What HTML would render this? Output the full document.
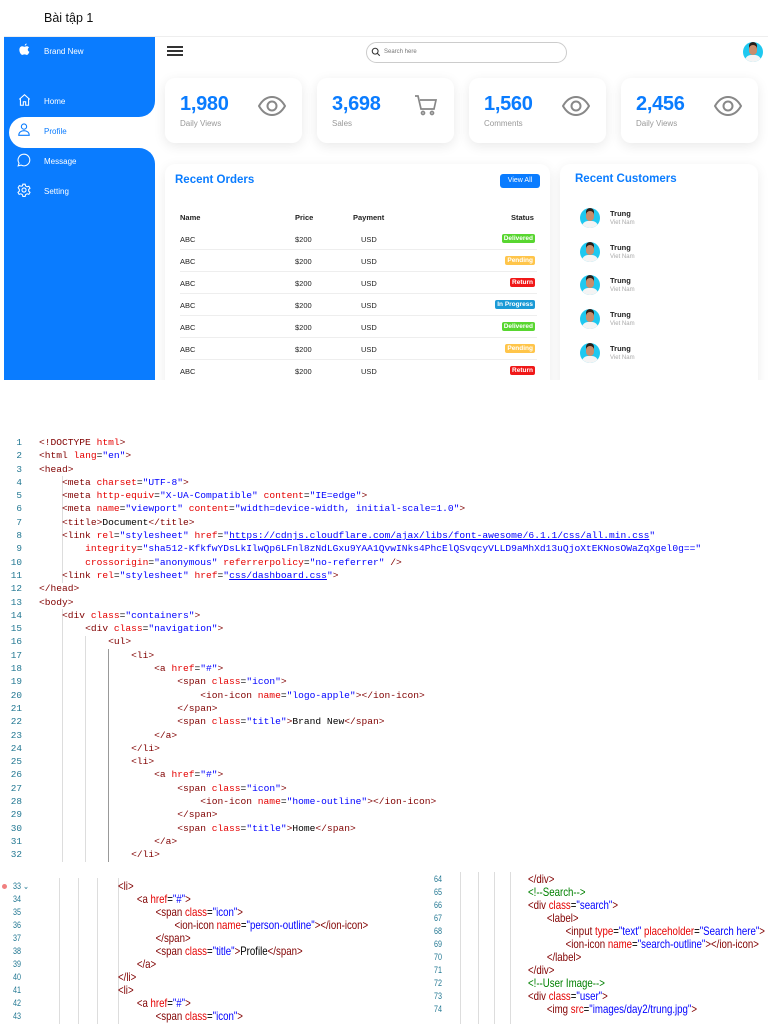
<!DOCTYPE html>
<html><head><meta charset="utf-8">
<style>
*{margin:0;padding:0;box-sizing:border-box}
body{width:768px;height:1024px;background:#fff;position:relative;overflow:hidden;font-family:"Liberation Sans",sans-serif}
.abs{position:absolute}
.side{left:4px;top:37px;width:151px;height:343px;background:#0a7cff}
.nav{position:absolute;left:44px;color:#fff;font-size:8px}
.card{position:absolute;top:78px;width:137px;height:65px;background:#fff;border-radius:10px;box-shadow:0 3px 12px rgba(0,0,0,.09)}
.card .n{position:absolute;left:15px;top:15px;font-size:20px;color:#0a7cff;font-weight:bold;letter-spacing:-.3px}
.card .l{position:absolute;left:15px;top:41px;font-size:8px;color:#999}
.card svg{position:absolute;right:16px;top:18px}
.row{position:absolute;left:180px;width:357px;height:22px;border-bottom:1px solid #eee;font-size:7.5px;color:#222}
.row span{position:absolute;top:7px}
.badge{position:absolute;right:2px;top:6px;color:#fff;font-weight:bold;font-size:6.5px;padding:1px 2px;border-radius:2px}
.av{position:absolute;width:20px;height:20px;border-radius:50%;background:#1ec8f0;overflow:hidden}
.av::after{content:"";position:absolute;left:6px;top:3px;width:8px;height:10px;border-radius:4px;background:#c98d6c;box-shadow:0 -3px 0 #2a1f1a}
.av::before{content:"";position:absolute;left:2px;top:13px;width:16px;height:10px;border-radius:6px 6px 0 0;background:#f4f4f4}
.code{position:absolute;font-family:"Liberation Mono",monospace;font-size:9.6px;line-height:13.3px;white-space:pre;color:#000}
.num{position:absolute;font-family:"Liberation Mono",monospace;font-size:9.4px;line-height:13.3px;color:#237893;white-space:pre;text-align:right;width:20px}
.t{color:#800000}.a{color:#e50000}.v{color:#0000ff}.u{text-decoration:underline;color:#0000ff}.c{color:#008000}
.code2{position:absolute;font-family:"Liberation Sans",sans-serif;font-size:11.8px;line-height:13px;white-space:pre;transform:scaleX(.82);transform-origin:left top}
.num2{position:absolute;font-family:"Liberation Sans",sans-serif;font-size:9px;line-height:13px;color:#237893;white-space:pre;transform:scaleX(.8);transform-origin:left top}
.g{position:absolute;width:1px;background:#ddd}
</style></head><body>
<div class="abs" style="left:44px;top:11px;font-size:12.5px;color:#111">Bài tập 1</div>
<div class="abs" style="left:4px;top:36px;width:764px;height:344px;background:#fff;border-top:1px solid #eee"></div>
<div class="abs side"></div>
<div class="abs" style="left:9px;top:117px;width:146px;height:31px;background:#fff;border-radius:16px 0 0 16px"></div>
<div class="abs" style="left:135px;top:97px;width:20px;height:20px;background:#fff"></div>
<div class="abs" style="left:135px;top:97px;width:20px;height:20px;background:#0a7cff;border-radius:0 0 16px 0"></div>
<div class="abs" style="left:135px;top:148px;width:20px;height:20px;background:#fff"></div>
<div class="abs" style="left:135px;top:148px;width:20px;height:20px;background:#0a7cff;border-radius:0 16px 0 0"></div>
<svg class="abs" style="left:18px;top:43px" width="13" height="13" viewBox="0 0 24 24"><path fill="#fff" d="M16 1c0 2-1.5 3.8-3.5 4C12.3 3 14 1.2 16 1zM12 7c1 0 2.5-1.2 4.3-1 1 0 3 .5 4 2.2-3.3 2-2.7 6.8.7 8C20 19 18.3 22 16.5 22c-1.5 0-2-1-4.4-1s-3 1-4.3 1C5.5 22 2.5 17 2.5 12.5c0-4.3 2.8-6.5 5.3-6.5 1.8 0 3 1 4.2 1z"/></svg>
<div class="nav" style="top:47px">Brand New</div>
<svg class="abs" style="left:17px;top:93px" width="15" height="14" viewBox="0 0 24 24" fill="none" stroke="#fff" stroke-width="1.8"><path d="M3 11L12 3l9 8M5 9v12h5v-6h4v6h5V9"/></svg>
<div class="nav" style="top:97px">Home</div>
<svg class="abs" style="left:17px;top:122px" width="14" height="15" viewBox="0 0 24 24" fill="none" stroke="#0a7cff" stroke-width="1.8"><circle cx="12" cy="7" r="4.5"/><path d="M3 22c0-5 4-8 9-8s9 3 9 8z"/></svg>
<div class="nav" style="top:127px;color:#0a7cff">Profile</div>
<svg class="abs" style="left:17px;top:153px" width="14" height="14" viewBox="0 0 24 24" fill="none" stroke="#fff" stroke-width="1.8"><path d="M12 2a10 10 0 1 1-5 18.7L2 22l1.5-4.5A10 10 0 0 1 12 2z"/></svg>
<div class="nav" style="top:157px">Message</div>
<svg class="abs" style="left:17px;top:183px" width="14" height="14" viewBox="0 0 24 24" fill="none" stroke="#fff" stroke-width="1.8"><circle cx="12" cy="12" r="3.5"/><path d="M10 2h4l.7 3 2.6 1.5 3-1 2 3.5-2.3 2v3l2.3 2-2 3.5-3-1-2.6 1.5-.7 3h-4l-.7-3-2.6-1.5-3 1-2-3.5 2.3-2v-3L2 8l2-3.5 3 1L9.3 5z"/></svg>
<div class="nav" style="top:187px">Setting</div>

<div class="abs" style="left:167px;top:46px;width:16px;height:2px;background:#333;box-shadow:0 4px 0 #333,0 8px 0 #333"></div>
<div class="abs" style="left:366px;top:42px;width:201px;height:21px;border:1px solid #ccc;border-radius:11px"></div>
<svg class="abs" style="left:371px;top:47px" width="10" height="10" viewBox="0 0 24 24" fill="none" stroke="#333" stroke-width="2.5"><circle cx="10" cy="10" r="7"/><path d="M15 15l6 6"/></svg>
<div class="abs" style="left:384px;top:49px;font-size:6px;color:#777">Search here</div>
<div class="av" style="left:743px;top:42px"></div>

<div class="card" style="left:165px"><div class="n">1,980</div><div class="l">Daily Views</div><svg width="28" height="20" viewBox="0 0 28 20" fill="none" stroke="#888" stroke-width="2"><path d="M1 10C5 3 10 1 14 1s9 2 13 9c-4 7-9 9-13 9S5 17 1 10z"/><circle cx="14" cy="10" r="4.5"/></svg></div>
<div class="card" style="left:317px"><div class="n">3,698</div><div class="l">Sales</div><svg width="24" height="24" style="top:15px" viewBox="0 0 24 24" fill="none" stroke="#888" stroke-width="1.7"><path d="M1 3h3l3 13h13l2-9H6"/><circle cx="9" cy="20" r="1.5"/><circle cx="18" cy="20" r="1.5"/></svg></div>
<div class="card" style="left:469px"><div class="n">1,560</div><div class="l">Comments</div><svg width="28" height="20" viewBox="0 0 28 20" fill="none" stroke="#888" stroke-width="2"><path d="M1 10C5 3 10 1 14 1s9 2 13 9c-4 7-9 9-13 9S5 17 1 10z"/><circle cx="14" cy="10" r="4.5"/></svg></div>
<div class="card" style="left:621px"><div class="n">2,456</div><div class="l">Daily Views</div><svg width="28" height="20" viewBox="0 0 28 20" fill="none" stroke="#888" stroke-width="2"><path d="M1 10C5 3 10 1 14 1s9 2 13 9c-4 7-9 9-13 9S5 17 1 10z"/><circle cx="14" cy="10" r="4.5"/></svg></div>

<div class="abs" style="left:165px;top:164px;width:385px;height:230px;border-radius:10px;box-shadow:0 3px 12px rgba(0,0,0,.08);background:#fff"></div>
<div class="abs" style="left:560px;top:164px;width:198px;height:230px;border-radius:10px;box-shadow:0 3px 12px rgba(0,0,0,.08);background:#fff"></div>
<div class="abs" style="left:0;top:380px;width:768px;height:50px;background:#fff"></div>
<div class="abs" style="left:175px;top:174px;font-size:11.5px;font-weight:bold;color:#0a7cff">Recent Orders</div>
<div class="abs" style="left:500px;top:174px;width:40px;height:14px;background:#0a7cff;border-radius:3px;color:#fff;font-size:7px;text-align:center;line-height:14px">View All</div>
<div class="abs" style="left:180px;top:213px;font-size:7.5px;font-weight:bold;color:#222">Name</div>
<div class="abs" style="left:295px;top:213px;font-size:7.5px;font-weight:bold;color:#222">Price</div>
<div class="abs" style="left:353px;top:213px;font-size:7.5px;font-weight:bold;color:#222">Payment</div>
<div class="abs" style="left:511px;top:213px;font-size:7.5px;font-weight:bold;color:#222">Status</div>
<div class="row" style="top:228px"><span style="left:0">ABC</span><span style="left:115px">$200</span><span style="left:181px">USD</span><b class="badge" style="background:#58d630">Delivered</b></div>
<div class="row" style="top:250px"><span style="left:0">ABC</span><span style="left:115px">$200</span><span style="left:181px">USD</span><b class="badge" style="background:#ffc54a">Pending</b></div>
<div class="row" style="top:272px"><span style="left:0">ABC</span><span style="left:115px">$200</span><span style="left:181px">USD</span><b class="badge" style="background:#f01818">Return</b></div>
<div class="row" style="top:294px"><span style="left:0">ABC</span><span style="left:115px">$200</span><span style="left:181px">USD</span><b class="badge" style="background:#1b9ad6">In Progress</b></div>
<div class="row" style="top:316px"><span style="left:0">ABC</span><span style="left:115px">$200</span><span style="left:181px">USD</span><b class="badge" style="background:#58d630">Delivered</b></div>
<div class="row" style="top:338px"><span style="left:0">ABC</span><span style="left:115px">$200</span><span style="left:181px">USD</span><b class="badge" style="background:#ffc54a">Pending</b></div>
<div class="row" style="top:360px;border:0;height:20px;overflow:hidden"><span style="left:0">ABC</span><span style="left:115px">$200</span><span style="left:181px">USD</span><b class="badge" style="background:#f01818">Return</b></div>

<div class="abs" style="left:575px;top:173px;font-size:11.5px;font-weight:bold;color:#0a7cff">Recent Customers</div>
<div class="av" style="left:580px;top:208px"></div><div class="abs" style="left:610px;top:209px;font-size:7.5px;font-weight:bold;color:#222">Trung</div><div class="abs" style="left:610px;top:220px;font-size:6px;color:#aaa">Viet Nam</div>
<div class="av" style="left:580px;top:242px"></div><div class="abs" style="left:610px;top:243px;font-size:7.5px;font-weight:bold;color:#222">Trung</div><div class="abs" style="left:610px;top:254px;font-size:6px;color:#aaa">Viet Nam</div>
<div class="av" style="left:580px;top:275px"></div><div class="abs" style="left:610px;top:276px;font-size:7.5px;font-weight:bold;color:#222">Trung</div><div class="abs" style="left:610px;top:287px;font-size:6px;color:#aaa">Viet Nam</div>
<div class="av" style="left:580px;top:309px"></div><div class="abs" style="left:610px;top:310px;font-size:7.5px;font-weight:bold;color:#222">Trung</div><div class="abs" style="left:610px;top:321px;font-size:6px;color:#aaa">Viet Nam</div>
<div class="av" style="left:580px;top:343px"></div><div class="abs" style="left:610px;top:344px;font-size:7.5px;font-weight:bold;color:#222">Trung</div><div class="abs" style="left:610px;top:355px;font-size:6px;color:#aaa">Viet Nam</div>
<div class="abs" style="left:556px;top:380px;width:212px;height:50px;background:#fff"></div>

<div class="num" style="left:2px;top:436px">1
2
3
4
5
6
7
8
9
10
11
12
13
14
15
16
17
18
19
20
21
22
23
24
25
26
27
28
29
30
31
32</div>
<div class="g" style="left:62px;top:476px;height:107px"></div>
<div class="g" style="left:62px;top:609px;height:253px"></div>
<div class="g" style="left:85px;top:636px;height:226px"></div>
<div class="g" style="left:108px;top:649px;height:213px;background:#999"></div>
<div class="code" style="left:39px;top:436px"><span class="t">&lt;!DOCTYPE</span> <span class="a">html</span><span class="t">&gt;</span>
<span class="t">&lt;html</span> <span class="a">lang</span>=<span class="v">"en"</span><span class="t">&gt;</span>
<span class="t">&lt;head&gt;</span>
    <span class="t">&lt;meta</span> <span class="a">charset</span>=<span class="v">"UTF-8"</span><span class="t">&gt;</span>
    <span class="t">&lt;meta</span> <span class="a">http-equiv</span>=<span class="v">"X-UA-Compatible"</span> <span class="a">content</span>=<span class="v">"IE=edge"</span><span class="t">&gt;</span>
    <span class="t">&lt;meta</span> <span class="a">name</span>=<span class="v">"viewport"</span> <span class="a">content</span>=<span class="v">"width=device-width, initial-scale=1.0"</span><span class="t">&gt;</span>
    <span class="t">&lt;title&gt;</span>Document<span class="t">&lt;/title&gt;</span>
    <span class="t">&lt;link</span> <span class="a">rel</span>=<span class="v">"stylesheet"</span> <span class="a">href</span>=<span class="v">"<span class="u">https://cdnjs.cloudflare.com/ajax/libs/font-awesome/6.1.1/css/all.min.css</span>"</span>
        <span class="a">integrity</span>=<span class="v">"sha512-KfkfwYDsLkIlwQp6LFnl8zNdLGxu9YAA1QvwINks4PhcElQSvqcyVLLD9aMhXd13uQjoXtEKNosOWaZqXgel0g=="</span>
        <span class="a">crossorigin</span>=<span class="v">"anonymous"</span> <span class="a">referrerpolicy</span>=<span class="v">"no-referrer"</span> <span class="t">/&gt;</span>
    <span class="t">&lt;link</span> <span class="a">rel</span>=<span class="v">"stylesheet"</span> <span class="a">href</span>=<span class="v">"<span class="u">css/dashboard.css</span>"</span><span class="t">&gt;</span>
<span class="t">&lt;/head&gt;</span>
<span class="t">&lt;body&gt;</span>
    <span class="t">&lt;div</span> <span class="a">class</span>=<span class="v">"containers"</span><span class="t">&gt;</span>
        <span class="t">&lt;div</span> <span class="a">class</span>=<span class="v">"navigation"</span><span class="t">&gt;</span>
            <span class="t">&lt;ul&gt;</span>
                <span class="t">&lt;li&gt;</span>
                    <span class="t">&lt;a</span> <span class="a">href</span>=<span class="v">"#"</span><span class="t">&gt;</span>
                        <span class="t">&lt;span</span> <span class="a">class</span>=<span class="v">"icon"</span><span class="t">&gt;</span>
                            <span class="t">&lt;ion-icon</span> <span class="a">name</span>=<span class="v">"logo-apple"</span><span class="t">&gt;&lt;/ion-icon&gt;</span>
                        <span class="t">&lt;/span&gt;</span>
                        <span class="t">&lt;span</span> <span class="a">class</span>=<span class="v">"title"</span><span class="t">&gt;</span>Brand New<span class="t">&lt;/span&gt;</span>
                    <span class="t">&lt;/a&gt;</span>
                <span class="t">&lt;/li&gt;</span>
                <span class="t">&lt;li&gt;</span>
                    <span class="t">&lt;a</span> <span class="a">href</span>=<span class="v">"#"</span><span class="t">&gt;</span>
                        <span class="t">&lt;span</span> <span class="a">class</span>=<span class="v">"icon"</span><span class="t">&gt;</span>
                            <span class="t">&lt;ion-icon</span> <span class="a">name</span>=<span class="v">"home-outline"</span><span class="t">&gt;&lt;/ion-icon&gt;</span>
                        <span class="t">&lt;/span&gt;</span>
                        <span class="t">&lt;span</span> <span class="a">class</span>=<span class="v">"title"</span><span class="t">&gt;</span>Home<span class="t">&lt;/span&gt;</span>
                    <span class="t">&lt;/a&gt;</span>
                <span class="t">&lt;/li&gt;</span></div>

<div class="abs" style="left:2px;top:884px;width:5px;height:5px;border-radius:50%;background:#f08080"></div>
<div class="num2" style="left:13px;top:880px">33 ⌄
34
35
36
37
38
39
40
41
42
43</div>
<div class="g" style="left:59px;top:878px;height:146px"></div>
<div class="g" style="left:78px;top:878px;height:146px"></div>
<div class="g" style="left:97px;top:878px;height:146px"></div>
<div class="g" style="left:118px;top:878px;height:146px"></div>
<div class="code2" style="left:118px;top:880px"><span class="t">&lt;li&gt;</span>
       <span class="t">&lt;a</span> <span class="a">href</span>=<span class="v">"#"</span><span class="t">&gt;</span>
              <span class="t">&lt;span</span> <span class="a">class</span>=<span class="v">"icon"</span><span class="t">&gt;</span>
                     <span class="t">&lt;ion-icon</span> <span class="a">name</span>=<span class="v">"person-outline"</span><span class="t">&gt;&lt;/ion-icon&gt;</span>
              <span class="t">&lt;/span&gt;</span>
              <span class="t">&lt;span</span> <span class="a">class</span>=<span class="v">"title"</span><span class="t">&gt;</span>Profile<span class="t">&lt;/span&gt;</span>
       <span class="t">&lt;/a&gt;</span>
<span class="t">&lt;/li&gt;</span>
<span class="t">&lt;li&gt;</span>
       <span class="t">&lt;a</span> <span class="a">href</span>=<span class="v">"#"</span><span class="t">&gt;</span>
              <span class="t">&lt;span</span> <span class="a">class</span>=<span class="v">"icon"</span><span class="t">&gt;</span></div>

<div class="num2" style="left:434px;top:873px">64
65
66
67
68
69
70
71
72
73
74</div>
<div class="g" style="left:460px;top:872px;height:152px"></div>
<div class="g" style="left:478px;top:872px;height:152px"></div>
<div class="g" style="left:494px;top:872px;height:152px"></div>
<div class="g" style="left:510px;top:872px;height:152px"></div>
<div class="code2" style="left:528px;top:873px"><span class="t">&lt;/div&gt;</span>
<span class="c">&lt;!--Search--&gt;</span>
<span class="t">&lt;div</span> <span class="a">class</span>=<span class="v">"search"</span><span class="t">&gt;</span>
       <span class="t">&lt;label&gt;</span>
              <span class="t">&lt;input</span> <span class="a">type</span>=<span class="v">"text"</span> <span class="a">placeholder</span>=<span class="v">"Search here"</span><span class="t">&gt;</span>
              <span class="t">&lt;ion-icon</span> <span class="a">name</span>=<span class="v">"search-outline"</span><span class="t">&gt;&lt;/ion-icon&gt;</span>
       <span class="t">&lt;/label&gt;</span>
<span class="t">&lt;/div&gt;</span>
<span class="c">&lt;!--User Image--&gt;</span>
<span class="t">&lt;div</span> <span class="a">class</span>=<span class="v">"user"</span><span class="t">&gt;</span>
       <span class="t">&lt;img</span> <span class="a">src</span>=<span class="v">"images/day2/trung.jpg"</span><span class="t">&gt;</span></div>
</body></html>
